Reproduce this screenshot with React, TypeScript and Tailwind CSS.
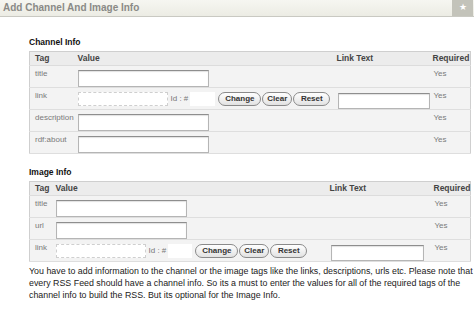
import * as React from "react"

const font = { fontFamily: '"Liberation Sans", Arial, sans-serif' }

function TextBox({ w, h = 17 }: { w: number; h?: number }) {
  return (
    <div
      className="bg-white border border-[#b5b5b5] border-t-[#8e8e8e] shadow-[inset_0_1px_1px_rgba(0,0,0,0.12)]"
      style={{ width: w, height: h }}
    />
  )
}

function Pill({ label, w }: { label: string; w: number }) {
  return (
    <div
      className="h-[14px] rounded-full border border-[#8a8a8a] bg-gradient-to-b from-white to-[#e2e2e2] flex items-center justify-center text-[8px] font-bold text-[#333]"
      style={{ width: w }}
    >
      {label}
    </div>
  )
}

function LinkValue({ dashed, small }: { dashed: number; small: number }) {
  return (
    <div className="flex items-center h-[14px]">
      <div className="h-[14px] border border-dashed border-[#cfcfcf] bg-white" style={{ width: dashed }} />
      <span className="text-[8px] text-[#777] ml-[3px] mr-[2px]">Id : #</span>
      <div className="h-[14px] bg-white" style={{ width: small }} />
      <div className="flex gap-[1px] ml-[3px]">
        <Pill label="Change" w={43} />
        <Pill label="Clear" w={30} />
        <Pill label="Reset" w={37} />
      </div>
    </div>
  )
}

type Row = { tag: string; link?: boolean }

function InfoTable({
  rows,
  cols,
  inputW,
  linkW,
  dashed,
  small,
}: {
  rows: Row[]
  cols: [number, number, number, number]
  inputW: number
  linkW: number
  dashed: number
  small: number
}) {
  return (
    <table className="border-collapse table-fixed w-[441px] border border-[#cfcfcf] bg-[#f3f3f3]">
      <colgroup>
        {cols.map((c, i) => (
          <col key={i} style={{ width: c }} />
        ))}
      </colgroup>
      <thead>
        <tr className="bg-[#ececec] h-[14px] border-b border-[#dcdcdc] text-[8.5px] leading-[13px] font-bold text-[#444]">
          <th className="text-left pl-[5px] p-0">Tag</th>
          <th className="text-left pl-[2px] p-0">Value</th>
          <th className="text-left pl-[3px] p-0">Link Text</th>
          <th className="text-left pl-[2px] p-0">Required</th>
        </tr>
      </thead>
      <tbody>
        {rows.map((r) => (
          <tr key={r.tag} className="h-[22px] border-b border-[#dedede] align-top text-[8px] leading-[12px] text-[#7a7a7a]">
            <td className="pl-[5px] pt-[2px]">{r.tag}</td>
            <td className="pl-[2px] pt-[4px]">
              {r.link ? <LinkValue dashed={dashed} small={small} /> : <TextBox w={inputW} />}
            </td>
            <td className="pl-[4px] pt-[5px]">{r.link && <TextBox w={linkW} h={16} />}</td>
            <td className="pl-[3px] pt-[2px]">Yes</td>
          </tr>
        ))}
      </tbody>
    </table>
  )
}

export default function App() {
  return (
    <div className="w-[474px] h-[316px] bg-white overflow-hidden antialiased" style={font}>
      <div className="flex items-stretch h-[17px] bg-gradient-to-b from-[#f6f6f1] to-[#ecece4] border-b border-[#c9c9c2]">
        <div className="flex-1 pl-[3px] text-[10px] font-bold text-[#8a8a86] leading-[16px]">
          Add Channel And Image Info
        </div>
        <div className="w-[21px] mr-[1px] bg-[#c3c3ba] flex items-center justify-center text-white text-[9px]">★</div>
      </div>

      <div className="pl-[29px] pt-[19px]">
        <div className="text-[8.5px] font-bold text-[#111] mb-[3px] leading-[12px]">Channel Info</div>
        <InfoTable
          rows={[{ tag: "title" }, { tag: "link", link: true }, { tag: "description" }, { tag: "rdf:about" }]}
          cols={[46, 258, 97, 40]}
          inputW={131}
          linkW={92}
          dashed={90}
          small={25}
        />

        <div className="text-[8.5px] font-bold text-[#111] mt-[12px] mb-[3px] leading-[12px]">Image Info</div>
        <InfoTable
          rows={[{ tag: "title" }, { tag: "url" }, { tag: "link", link: true }]}
          cols={[24, 273, 105, 39]}
          inputW={131}
          linkW={93}
          dashed={90}
          small={24}
        />

        <p className="w-[445px] text-[8.85px] leading-[12px] text-[#222] mt-[3px]">
          You have to add information to the channel or the image tags like the links, descriptions, urls etc. Please note that every RSS Feed should have a channel info. So its a must to enter the values for all of the required tags of the channel info to build the RSS. But its optional for the Image Info.
        </p>
      </div>
    </div>
  )
}
